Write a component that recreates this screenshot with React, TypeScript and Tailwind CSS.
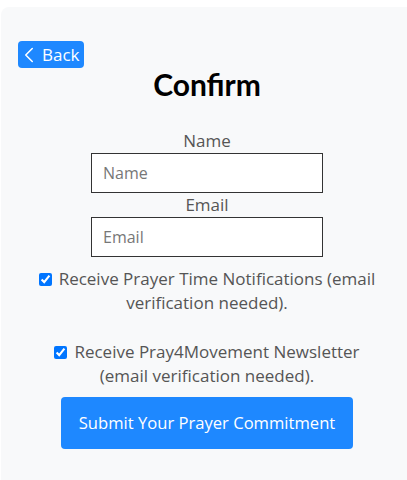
import { ChevronLeft } from 'lucide-react';

function App() {
  return (
    <div className="h-[480px] w-[407px] overflow-hidden bg-white pl-px pt-[7px] font-['Open_Sans',sans-serif]">
      <div className="h-full w-[412px] rounded-tl-lg bg-[#f8f9fa] px-[17px] pt-[34px]">
        <button className="flex h-[27px] w-[66px] items-center overflow-hidden rounded-[4px] bg-[#1e88ff] text-[17px] text-white">
          <ChevronLeft size={26} strokeWidth={1.4} className="-ml-[2px] shrink-0" />
          Back
        </button>

        <h1 className="-mt-[1px] text-center font-['Lato',sans-serif] text-[30px] font-bold leading-[34px] text-black">
          Confirm
        </h1>

        <form className="mt-[28px] flex flex-col items-center text-[17px] leading-6 text-[#555]">
          <label className="text-center">Name</label>
          <input
            type="text"
            placeholder="Name"
            className="h-10 w-[232px] border border-[#333] bg-white px-[11px] text-[16px] placeholder:text-[#777]"
          />
          <label className="text-center">Email</label>
          <input
            type="email"
            placeholder="Email"
            className="h-10 w-[232px] border border-[#333] bg-white px-[11px] text-[16px] placeholder:text-[#777]"
          />

          <p className="mt-[10px] w-[352px] text-center">
            <input type="checkbox" checked readOnly className="mr-[7px] align-[-1px] accent-[#0075ff]" />
            Receive Prayer Time Notifications (email verification needed).
          </p>

          <p className="mt-[25px] w-[352px] text-center">
            <input type="checkbox" checked readOnly className="mr-[7px] align-[-1px] accent-[#0075ff]" />
            Receive Pray4Movement Newsletter (email verification needed).
          </p>

          <button
            type="button"
            className="mt-[9px] h-[52px] w-[292px] rounded-[4px] bg-[#1e88ff] text-[16.6px] text-white"
          >
            Submit Your Prayer Commitment
          </button>
        </form>
      </div>
    </div>
  );
}

export default App;
